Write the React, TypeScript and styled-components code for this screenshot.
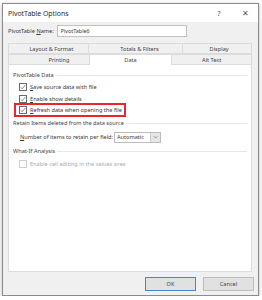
import React from "react";
import styled, { createGlobalStyle } from "styled-components";

const Global = createGlobalStyle`
  html, body { margin: 0; padding: 0; background: #ffffff; }
  body { font-family: "Noto Sans", "Open Sans", sans-serif; color: #333; }
  * { box-sizing: border-box; }
`;

const Dialog = styled.div`
  margin: 3px 0 0 2px;
  width: 257px;
  height: 293px;
  border: 1px solid #8c8c8c;
  background: #f0f0f0;
  box-shadow: 0 1px 4px rgba(0, 0, 0, 0.28);
  display: flex;
  flex-direction: column;
  font-size: 5.6px;
`;

const TitleBar = styled.div`
  height: 18px;
  background: #ffffff;
  display: flex;
  align-items: center;
  padding: 0 0 0 5px;
  font-size: 6.9px;
  color: #2a2a2a;
`;

const Title = styled.span`
  flex: 1;
`;

const TitleButton = styled.span`
  width: 26px;
  text-align: center;
  font-size: 7.5px;
  color: #555;
`;

const Body = styled.div`
  flex: 1;
  display: flex;
  flex-direction: column;
  padding: 3px 6px 0 5px;
`;

const NameRow = styled.div`
  display: flex;
  align-items: center;
  height: 12px;
  gap: 3px;
  color: #3a3a3a;
`;

const NameInput = styled.div`
  width: 130px;
  height: 12px;
  background: #fff;
  border: 1px solid #c2c2c2;
  display: flex;
  align-items: center;
  padding-left: 3px;
  font-size: 5.4px;
`;

const TabRow = styled.div<{ $first?: boolean }>`
  display: flex;
  height: 11px;
  margin-top: ${(p) => (p.$first ? "6px" : "0")};
`;

const Tab = styled.div<{ $w: number; $active?: boolean; $shift?: number }>`
  width: ${(p) => p.$w}px;
  height: 100%;
  display: flex;
  align-items: center;
  justify-content: center;
  padding-left: ${(p) => p.$shift ?? 0}px;
  background: ${(p) => (p.$active ? "#ffffff" : "#f0f0f0")};
  border: 1px solid #dcdcdc;
  border-bottom: ${(p) => (p.$active ? "none" : "1px solid #dcdcdc")};
  margin-left: -1px;
  &:first-child { margin-left: 0; }
  color: #444;
`;

const Panel = styled.div`
  height: 207px;
  background: #fff;
  border: 1px solid #dcdcdc;
  border-top: none;
  padding: 4px 4px 0 4px;
  display: flex;
  flex-direction: column;
`;

const GroupHeader = styled.div<{ $mt: number }>`
  display: flex;
  align-items: center;
  height: 10px;
  margin-top: ${(p) => p.$mt}px;
  gap: 2px;
  color: #444;
  &::after {
    content: "";
    flex: 1;
    height: 1px;
    background: #e6e6e6;
  }
`;

const CheckRow = styled.div<{ $mt?: number; $disabled?: boolean }>`
  display: flex;
  align-items: center;
  height: 12px;
  margin-top: ${(p) => p.$mt ?? 0}px;
  padding-left: 6px;
  gap: 3px;
  color: ${(p) => (p.$disabled ? "#ababab" : "#3a3a3a")};
`;

const Highlight = styled.div`
  display: flex;
  align-items: center;
  gap: 3px;
  margin-left: -5px;
  padding: 0 2px 0 3px;
  height: 14px;
  border: 2px solid #e8262b;
  margin-top: -2px;
`;

const Box = styled.span<{ $disabled?: boolean }>`
  width: 8px;
  height: 8px;
  border: 1px solid ${(p) => (p.$disabled ? "#cdcdcd" : "#6a6a6a")};
  background: #fff;
  display: flex;
  align-items: center;
  justify-content: center;
`;

const U = styled.span`
  text-decoration: underline;
`;

const SelectRow = styled.div`
  display: flex;
  align-items: center;
  height: 12px;
  margin-top: 3px;
  padding-left: 7px;
  gap: 1px;
  color: #3a3a3a;
`;

const Select = styled.div`
  width: 47px;
  height: 11px;
  border: 1px solid #bcbcbc;
  background: #fff;
  display: flex;
  align-items: center;
`;

const SelectValue = styled.span`
  flex: 1;
  padding-left: 2px;
`;

const SelectArrow = styled.span`
  width: 10px;
  height: 100%;
  background: #e6e6e6;
  border-left: 1px solid #cdcdcd;
  display: flex;
  align-items: center;
  justify-content: center;
`;

const Footer = styled.div`
  display: flex;
  justify-content: flex-end;
  gap: 7px;
  margin-top: 5px;
  margin-right: -2px;
`;

const Button = styled.div<{ $primary?: boolean }>`
  width: 51px;
  height: 14px;
  display: flex;
  align-items: center;
  justify-content: center;
  background: #e1e1e1;
  border: 1px solid ${(p) => (p.$primary ? "#3a8ad8" : "#bdbdbd")};
  color: #444;
`;

const Check = () => (
  <svg width="6" height="6" viewBox="0 0 6 6">
    <path d="M0.6 3.2 L2.3 4.8 L5.4 0.9" fill="none" stroke="#6a6a6a" strokeWidth="0.75" />
  </svg>
);

const Chevron = () => (
  <svg width="5" height="4" viewBox="0 0 5 4">
    <path d="M0.7 1.2 L2.5 3 L4.3 1.2" fill="none" stroke="#777" strokeWidth="0.7" />
  </svg>
);

export default function App() {
  return (
    <>
      <Global />
      <Dialog>
        <TitleBar>
          <Title>PivotTable Options</Title>
          <TitleButton>?</TitleButton>
          <TitleButton>✕</TitleButton>
        </TitleBar>
        <Body>
          <NameRow>
            <span>
              PivotTable <U>N</U>ame:
            </span>
            <NameInput>PivotTable6</NameInput>
          </NameRow>
          <TabRow $first>
            <Tab $w={81} $shift={6}>Layout &amp; Format</Tab>
            <Tab $w={96} $shift={8}>Totals &amp; Filters</Tab>
            <Tab $w={70} $shift={4}>Display</Tab>
          </TabRow>
          <TabRow>
            <Tab $w={82} $shift={20}>Printing</Tab>
            <Tab $w={84} $active>Data</Tab>
            <Tab $w={81}>Alt Text</Tab>
          </TabRow>
          <Panel>
            <GroupHeader $mt={1}>PivotTable Data</GroupHeader>
            <CheckRow $mt={1}>
              <Box><Check /></Box>
              <span><U>S</U>ave source data with file</span>
            </CheckRow>
            <CheckRow>
              <Box><Check /></Box>
              <span><U>E</U>nable show details</span>
            </CheckRow>
            <CheckRow>
              <Highlight>
                <Box><Check /></Box>
                <span><U>R</U>efresh data when opening the file</span>
              </Highlight>
            </CheckRow>
            <GroupHeader $mt={1}>Retain Items deleted from the data source</GroupHeader>
            <SelectRow>
              <span><U>N</U>umber of items to retain per field:</span>
              <Select>
                <SelectValue>Automatic</SelectValue>
                <SelectArrow><Chevron /></SelectArrow>
              </Select>
            </SelectRow>
            <GroupHeader $mt={3}>What-If Analysis</GroupHeader>
            <CheckRow $mt={2} $disabled>
              <Box $disabled />
              <span>Enable cell editing in the values area</span>
            </CheckRow>
          </Panel>
          <Footer>
            <Button $primary>OK</Button>
            <Button>Cancel</Button>
          </Footer>
        </Body>
      </Dialog>
    </>
  );
}
